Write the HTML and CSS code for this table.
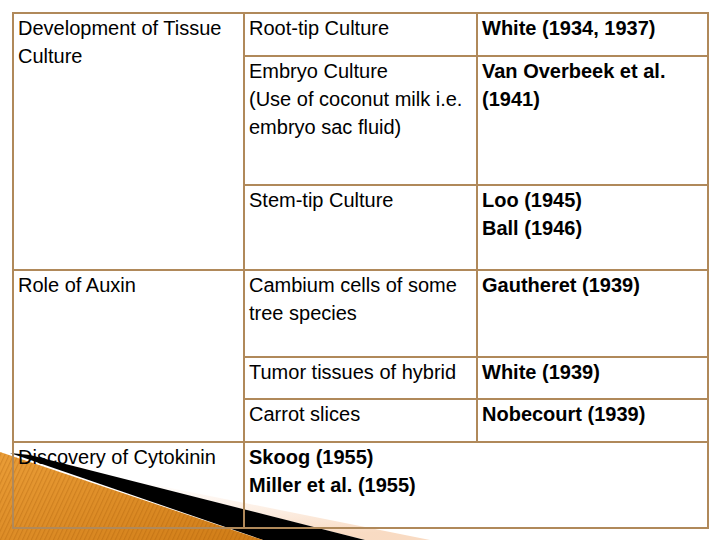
FILE: index.html
```html
<!DOCTYPE html>
<html>
<head>
<meta charset="utf-8">
<link rel="stylesheet" href="styles.css">
</head>
<body>
<div class="slide">
  <svg class="deco" width="720" height="540" viewBox="0 0 720 540" xmlns="http://www.w3.org/2000/svg">
    <defs>
      <linearGradient id="og" x1="0" y1="0" x2="1" y2="1">
        <stop offset="0" stop-color="#eb9e38"/>
        <stop offset="1" stop-color="#d07c16"/>
      </linearGradient>
      <linearGradient id="pg" x1="0" y1="0" x2="0.2" y2="1">
        <stop offset="0" stop-color="#fde9da" stop-opacity="0"/>
        <stop offset="1" stop-color="#f7d2b4" stop-opacity="0.8"/>
      </linearGradient>
      <pattern id="hatch" width="4" height="4" patternUnits="userSpaceOnUse" patternTransform="rotate(25)">
        <rect width="1.2" height="4" fill="#a85a08" fill-opacity="0.3"/>
      </pattern>
    </defs>
    <polygon points="160,486 430,540 365,540 120,478" fill="url(#pg)"/>
    <polygon points="10,453 30,455 365,540 263,540" fill="#000"/>
    <polygon points="0,452 263,540 0,540" fill="url(#og)"/>
    <polygon points="0,452 263,540 0,540" fill="url(#hatch)"/>
  </svg>
  <div class="grid">
    <div class="cell c1 r1-3">Development of Tissue Culture</div>
    <div class="cell">Root-tip Culture</div>
    <div class="cell b">White (1934, 1937)</div>
    <div class="cell">Embryo Culture<br>(Use of coconut milk i.e.<br>embryo sac fluid)</div>
    <div class="cell b">Van Overbeek et al.<br>(1941)</div>
    <div class="cell">Stem-tip Culture</div>
    <div class="cell b">Loo (1945)<br>Ball (1946)</div>
    <div class="cell c1 r4-6">Role of Auxin</div>
    <div class="cell">Cambium cells of some<br>tree species</div>
    <div class="cell b">Gautheret (1939)</div>
    <div class="cell">Tumor tissues of hybrid</div>
    <div class="cell b">White (1939)</div>
    <div class="cell">Carrot slices</div>
    <div class="cell b">Nobecourt (1939)</div>
    <div class="cell c1">Discovery of Cytokinin</div>
    <div class="cell b span2">Skoog (1955)<br>Miller et al. (1955)</div>
  </div>
</div>
</body>
</html>
```
FILE: styles.css
```css
html, body {
  margin: 0;
  padding: 0;
  background: #ffffff;
}
.slide {
  position: relative;
  width: 720px;
  height: 540px;
  overflow: hidden;
  padding: 12px 0 0 12px;
  box-sizing: border-box;
  font-family: "Liberation Sans", Arial, sans-serif;
  font-size: 20px;
  line-height: 28px;
  color: #000;
}
.deco {
  position: absolute;
  left: 0;
  top: 0;
  z-index: 0;
}
.grid {
  position: relative;
  z-index: 1;
  display: grid;
  grid-template-columns: 231px 233px 231px;
  grid-template-rows: 43px 129px 85px 87px 42px 43px 86px;
  width: 697px;
  border-top: 2px solid #b0895a;
  border-left: 2px solid #b0895a;
  box-sizing: border-box;
}
.cell {
  border-right: 2px solid #b0895a;
  border-bottom: 2px solid #b0895a;
  padding: 0 4px;
  overflow: hidden;
  white-space: nowrap;
}
.c1 { grid-column: 1; }
.r1-3 { grid-row: 1 / span 3; white-space: normal; }
.r4-6 { grid-row: 4 / span 3; }
.b { font-weight: bold; }
.span2 { grid-column: 2 / span 2; }
```
